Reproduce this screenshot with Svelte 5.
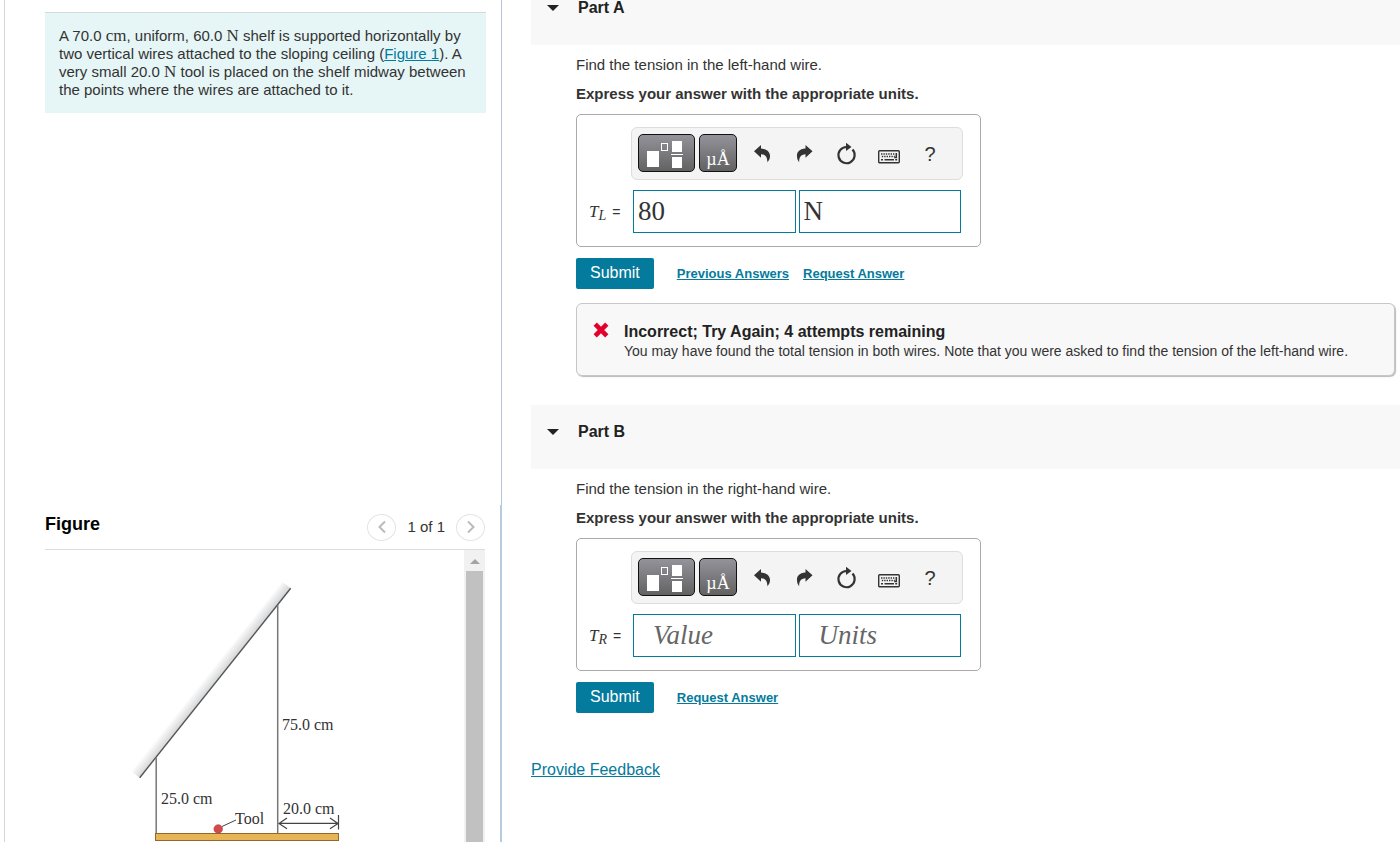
<script lang="ts">
    type Part = {
        id: string;
        title: string;
        side: string;
        symbol: string;
        value: string;
        units: string;
        links: string[];
        feedback?: { title: string; text: string };
    };

    let parts: Part[] = $state([
        {
            id: 'a',
            title: 'Part A',
            side: 'left-hand',
            symbol: 'L',
            value: '80',
            units: 'N',
            links: ['Previous Answers', 'Request Answer'],
            feedback: {
                title: 'Incorrect; Try Again; 4 attempts remaining',
                text: 'You may have found the total tension in both wires. Note that you were asked to find the tension of the left-hand wire.'
            }
        },
        {
            id: 'b',
            title: 'Part B',
            side: 'right-hand',
            symbol: 'R',
            value: '',
            units: '',
            links: ['Request Answer']
        }
    ]);
</script>

{#snippet toolbar()}
    <div class="toolbar">
        <button class="dark templates" aria-label="Templates">
            <svg width="55" height="36" viewBox="1 1 55 36" fill="#fff">
                <rect x="9" y="17" width="12" height="16" />
                <rect x="23.5" y="9.5" width="6" height="7" fill="none" stroke="#fff" />
                <rect x="34" y="7" width="10" height="11" />
                <rect x="33" y="20" width="12" height="1" />
                <rect x="34" y="23" width="10" height="11" />
            </svg>
        </button>
        <button class="dark symbols" aria-label="Symbols">µÅ</button>
        <div class="tools">
            <button aria-label="Undo">
                <svg width="24" height="24" viewBox="0 0 24 24">
                    <path d="M4 9.3 11 3v3.6c6 .3 9.3 3.4 9 8-.1 2.5-1.200 4.400-2.700 5.700.3-4.800-1.700-8-6.300-8.100v3.500z" />
                </svg>
            </button>
            <button aria-label="Redo">
                <svg width="24" height="24" viewBox="0 0 24 24">
                    <path d="M20.5 9.3 13.5 3v3.6c-6 .3-8.8 3.4-8.500 8 .1 2.500 1 4.400 2.200 5.700-.3-4.800 1.700-8 6.300-8.100v3.500z" />
                </svg>
            </button>
            <button aria-label="Reset">
                <svg width="24" height="24" viewBox="0 0 24 24">
                    <path d="M12.500 5a8.100 8.100 0 1 0 6 2.600" fill="none" stroke="#333" stroke-width="2.2" />
                    <path d="M12 .8 17.500 4.900 12 9z" />
                </svg>
            </button>
            <button aria-label="Keyboard shortcuts">
                <svg width="24" height="24" viewBox="0 0 24 24">
                    <rect x="2.700" y="8.700" width="20.600" height="12.100" rx="1" fill="none" stroke="#333" stroke-width="1.4" />
                    <path d="M5 12h14M5.800 14.500h13" stroke="#333" stroke-width="1.5" stroke-dasharray="1.4 1" />
                    <path d="M5 17.700h2M8.500 17.700h9.500M19.200 17.700h2M20.300 11v4.500h-2" fill="none" stroke="#333" stroke-width="1.5" />
                </svg>
            </button>
            <button class="help" aria-label="Help">?</button>
        </div>
    </div>
{/snippet}

<div class="page">
    <aside>
        <section class="problem">
            <p>
                A 70.0 <span class="unit">cm</span>, uniform, 60.0 <span class="unit">N</span> shelf is supported
                horizontally by two vertical wires attached to the sloping ceiling (<a href="#figure">Figure 1</a>). A
                very small 20.0 <span class="unit">N</span> tool is placed on the shelf midway between the points where
                the wires are attached to it.
            </p>
        </section>

        <section class="figure" id="figure">
            <header>
                <h2>Figure</h2>
                <nav>
                    <button aria-label="Previous figure">
                        <svg width="12" height="14" viewBox="0 0 12 14"><path d="M9 1.500 3.500 7 9 12.500" /></svg>
                    </button>
                    <span>1 of 1</span>
                    <button aria-label="Next figure">
                        <svg width="12" height="14" viewBox="0 0 12 14"><path d="M3 1.500 8.500 7 3 12.500" /></svg>
                    </button>
                </nav>
            </header>
            <div class="viewer">
                <svg class="diagram" width="419" height="292" viewBox="0 0 419 292">
                    <defs>
                        <linearGradient id="slab" gradientUnits="userSpaceOnUse" x1="170.7" y1="133" x2="162.5" y2="126.5">
                            <stop offset="0" stop-color="#d2d3d5" />
                            <stop offset="1" stop-color="#fafafa" />
                        </linearGradient>
                    </defs>
                    <path d="M94.700 227.700 245.700 38.300 237.500 32 86.500 221.400z" fill="url(#slab)" />
                    <path d="M94.700 227.700 245.700 38.300" stroke="#555" stroke-width="1.4" />
                    <path d="M111.200 207.500V284M232.700 55v229" stroke="#777" stroke-width="1.5" />
                    <rect x="110.5" y="283.5" width="183" height="7" fill="#e8b455" stroke="#8f6a2c" />
                    <path d="M177 276.500 191 270" stroke="#444" />
                    <circle cx="173.2" cy="279" r="4.3" fill="#d24a4c" stroke="#b03a3e" stroke-width=".6" />
                    <path d="M234 273.400h59M242 268l-8 5.400 8 5.400M285 268l8 5.400-8 5.400M293.500 265v14.500" fill="none" stroke="#444" stroke-width="1.2" />
                    <text x="237" y="180">75.0 cm</text>
                    <text x="116" y="254">25.0 cm</text>
                    <text x="238" y="264">20.0 cm</text>
                    <text x="190" y="274">Tool</text>
                </svg>
                <div class="track" aria-hidden="true">
                    <span class="up"></span>
                    <span class="thumb"></span>
                </div>
            </div>
        </section>
    </aside>

    <main>
        {#each parts as part (part.id)}
            <section class="part">
                <header>
                    <span class="caret"></span>
                    <h2>{part.title}</h2>
                </header>
                <div class="body">
                    <p>Find the tension in the {part.side} wire.</p>
                    <p class="instructions">Express your answer with the appropriate units.</p>

                    <div class="answer">
                        {@render toolbar()}
                        <div class="entry">
                            <label for="value-{part.id}"><i>T<sub>{part.symbol}</sub></i> =</label>
                            <input id="value-{part.id}" placeholder="Value" bind:value={part.value} />
                            <input aria-label="Units" placeholder="Units" bind:value={part.units} />
                        </div>
                    </div>

                    <div class="actions">
                        <button class="submit">Submit</button>
                        {#each part.links as link}
                            <a href="#{part.id}">{link}</a>
                        {/each}
                    </div>

                    {#if part.feedback}
                        <div class="feedback">
                            <svg width="16" height="16" viewBox="0 0 16 16">
                                <path d="M2.200 2.200 13.800 13.800M13.800 2.200 2.200 13.800" stroke="#e3002b" stroke-width="4.6" />
                            </svg>
                            <div>
                                <h3>{part.feedback.title}</h3>
                                <p>{part.feedback.text}</p>
                            </div>
                        </div>
                    {/if}
                </div>
            </section>
        {/each}
        <a class="provide" href="#feedback">Provide Feedback</a>
    </main>
</div>

<style>
    :global(body) {
        margin: 0;
        background: #fff;
    }

    .page {
        --teal: #047a9c;
        --serif: 'Liberation Serif', 'Times New Roman', serif;
        display: flex;
        height: 100vh;
        overflow: hidden;
        box-sizing: border-box;
        padding-left: 4px;
        color: #333;
        font-family: 'Liberation Sans', Arial, sans-serif;
        font-size: 15px;
        line-height: 18px;
    }

    h2,
    h3,
    p {
        margin: 0;
    }
    a {
        color: var(--teal);
    }
    button {
        font-family: inherit;
        cursor: pointer;
    }

    /* Left column: problem statement above, figure below */
    aside {
        flex: 0 0 calc(36% - 5px);
        box-sizing: border-box;
        border-left: 1px solid #d5d5d5;
    }
    .problem {
        height: 60%;
        box-sizing: border-box;
        padding: 12px 15px 0 40px;
        border-right: 1px solid #b9c4d6;
    }
    .problem p {
        padding: 14px;
        border-top: 1px solid #d5d9d9;
        background: #e6f6f6;
    }
    .unit {
        font-family: var(--serif);
        font-size: 17px;
        line-height: 0;
    }
    .figure {
        display: flex;
        flex-direction: column;
        height: 40%;
        box-sizing: border-box;
        padding: 0 15px 0 40px;
        border-right: 2px solid #b7cbe0;
    }
    .figure header {
        display: flex;
        align-items: center;
        justify-content: space-between;
        flex: none;
        box-sizing: border-box;
        height: 45px;
        border-bottom: 1px solid #dcdcdc;
    }
    .figure h2 {
        padding-bottom: 6px;
        color: #000;
        font-size: 18px;
    }
    .figure nav {
        display: flex;
        align-items: center;
        gap: 11px;
    }
    .figure nav button {
        display: grid;
        place-items: center;
        width: 29px;
        height: 27px;
        padding: 0;
        border: 1px solid #e4e4e4;
        border-radius: 50%;
        background: #fff;
    }
    .figure nav path {
        fill: none;
        stroke: #bbb;
        stroke-width: 2;
    }
    .viewer {
        display: flex;
        justify-content: space-between;
        flex: 1;
        min-height: 0;
        overflow: hidden;
    }
    .diagram {
        flex: none;
    }
    .diagram text {
        fill: #333;
        font-family: var(--serif);
        font-size: 16px;
    }
    .track {
        display: flex;
        flex-direction: column;
        align-items: center;
        width: 21px;
        background: #f1f1f1;
    }
    .up {
        margin: 9px 0 7px;
        border: 5px solid transparent;
        border-top: 0;
        border-bottom-color: #a3a3a3;
    }
    .thumb {
        flex: 1;
        width: 17px;
        background: #c1c1c1;
    }

    main {
        flex: 1;
        min-width: 0;
        margin-top: -19px;
        padding-left: 29px;
    }
    .part {
        margin-bottom: 29px;
    }
    .part header {
        display: flex;
        align-items: center;
        box-sizing: border-box;
        height: 64px;
        padding: 0 0 11px 16px;
        background: #f8f8f8;
    }
    .caret {
        border: 6px solid transparent;
        border-top-color: #222;
        border-bottom: 0;
    }
    .part h2 {
        margin-left: 19px;
        color: #222;
        font-size: 16px;
    }
    .body {
        padding: 11px 5px 0 45px;
    }
    .instructions {
        margin: 11px 0;
        font-weight: bold;
    }

    .answer {
        width: 405px;
        box-sizing: border-box;
        padding: 12px 19px 13px 12px;
        border: 1px solid #aaa;
        border-radius: 5px;
    }
    .toolbar {
        display: flex;
        box-sizing: border-box;
        width: 332px;
        height: 53px;
        margin-left: 42px;
        padding: 6px;
        gap: 4px;
        border: 1px solid #ddd;
        border-radius: 6px;
        background: #f4f4f4;
    }
    .dark {
        box-sizing: border-box;
        height: 38px;
        padding: 0;
        border: 1px solid #111;
        border-radius: 5px;
        background: linear-gradient(#94939b, #626262);
        color: #fff;
    }
    .templates {
        width: 57px;
    }
    .templates svg {
        display: block;
    }
    .symbols {
        width: 38px;
        padding-top: 12px;
        font-family: var(--serif);
        font-size: 18px;
    }
    .tools {
        display: flex;
    }
    .tools button {
        display: grid;
        place-items: center;
        width: 42px;
        height: 40px;
        padding: 0;
        border: 0;
        background: none;
        color: #333;
        font-size: 20px;
    }
    .tools svg {
        fill: #333;
    }

    .entry {
        display: flex;
        align-items: center;
        gap: 3px;
        margin-top: 10px;
    }
    .entry label {
        width: 41px;
        font-size: 14px;
        white-space: nowrap;
    }
    .entry i {
        margin-right: 2px;
        font-family: var(--serif);
        font-size: 17px;
    }
    .entry sub {
        font-size: 14px;
        line-height: 0;
        vertical-align: -3px;
    }
    .entry input {
        flex: 1;
        min-width: 0;
        box-sizing: border-box;
        height: 43px;
        padding: 0 4px;
        border: 1px solid var(--teal);
        background: #fff;
        color: #333;
        font-family: var(--serif);
        font-size: 27px;
    }
    .entry input:placeholder-shown {
        padding-left: 19px;
    }
    .entry input::placeholder {
        color: #666;
        font-style: italic;
    }

    .actions {
        display: flex;
        align-items: center;
        gap: 14px;
        margin-top: 11px;
        font-size: 13px;
        font-weight: bold;
    }
    .submit {
        height: 31px;
        margin-right: 9px;
        padding: 0 14px 2px;
        border: 0;
        border-radius: 2px;
        background: var(--teal);
        color: #fff;
        font-size: 16px;
    }

    .feedback {
        display: flex;
        gap: 15px;
        margin-top: 14px;
        padding: 18px 14px 15px 16px;
        border: 1px solid #c7c7c7;
        border-radius: 6px;
        background: #f8f8f8;
        box-shadow: 1px 1px 1px #bbb;
    }
    .feedback svg {
        flex: none;
    }
    .feedback h3 {
        color: #222;
        font-size: 16px;
        line-height: 20px;
    }
    .feedback p {
        font-size: 14px;
    }

    .provide {
        display: inline-block;
        margin-top: 19px;
        font-size: 16px;
    }
</style>
